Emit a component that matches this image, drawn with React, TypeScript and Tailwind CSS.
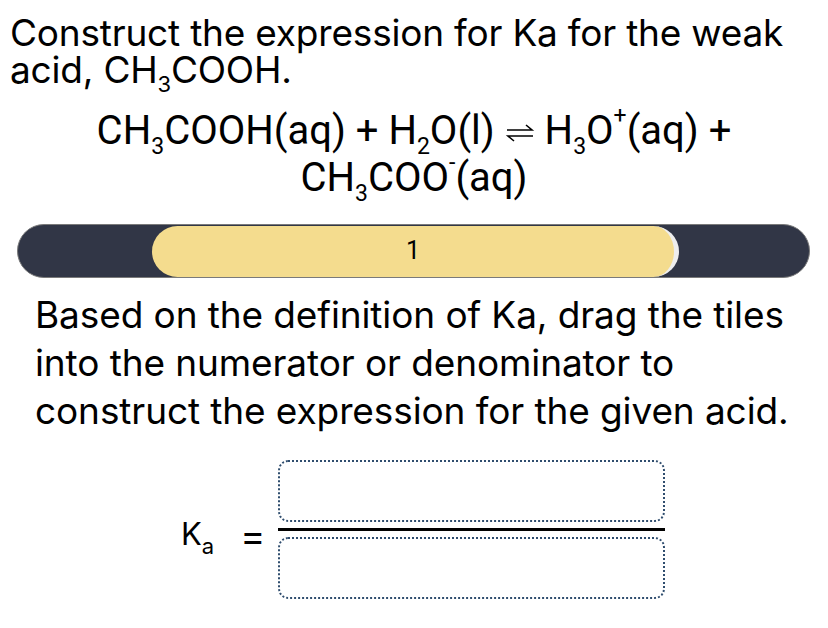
import React from "react";

const sans = { fontFamily: "Inter, 'Noto Sans', sans-serif" };
const narrow = { fontFamily: "'Liberation Sans Narrow', 'Roboto', sans-serif" };

function Sub({ children }: { children: React.ReactNode }) {
  return <sub className="text-[23px] leading-none align-[-4px]">{children}</sub>;
}
function Sup({ children }: { children: React.ReactNode }) {
  return <sup className="text-[23px] leading-none align-[10px]">{children}</sup>;
}

export default function App() {
  return (
    <div className="w-[828px] h-[628px] bg-white text-black overflow-hidden" style={sans}>
      <div className="pl-[10px] pt-[14px] text-[37px] leading-[37px] tracking-[-0.2px]">
        Construct the expression for Ka for the weak
        <br />
        acid, CH<sub className="text-[22px] leading-none align-[-3px]">3</sub>COOH.
      </div>

      <div className="mt-[18px] flex flex-col items-center text-[40px] leading-[47px]" style={narrow}>
        <div>
          CH<Sub>3</Sub>COOH(aq) + H<Sub>2</Sub>O(l){" "}
          <span className="inline-block align-middle">
            <svg width="30" height="20" viewBox="0 0 30 20" fill="none" stroke="black" strokeWidth="1.6">
              <path d="M2 7 H27 L21 2" />
              <path d="M28 13 H3 L9 18" />
            </svg>
          </span>{" "}
          H<Sub>3</Sub>O<Sup>+</Sup>(aq) +
        </div>
        <div>
          CH<Sub>3</Sub>COO<Sup>-</Sup>(aq)
        </div>
      </div>

      <div className="mt-[23px] ml-[17px] w-[793px] h-[54px] rounded-full bg-[#313646] border-[1.5px] border-[#7a7a7a] flex items-center">
        <div className="ml-[134px] w-[527px] h-[51px] rounded-full bg-[#f4dc8e] border-r-[5px] border-[#eeeeee] flex items-center justify-center text-[25px] text-black" style={narrow}>
          1
        </div>
      </div>

      <div className="pl-[35px] pt-[13px] text-[37px] leading-[48px] tracking-[-0.1px]">
        Based on the definition of Ka, drag the tiles
        <br />
        into the numerator or denominator to
        <br />
        construct the expression for the given acid.
      </div>

      <div className="mt-[25px] flex items-center">
        <div className="ml-[181px] w-[97px] pt-[10px] flex items-center text-[31px]">
          <span>K<sub className="text-[22px] leading-none align-[-3px]">a</sub></span>
          <span className="ml-[26px] text-[38px] leading-none">=</span>
        </div>
        <div className="flex flex-col w-[387px]">
          <div className="h-[62px] rounded-[10px] border-2 border-dotted border-[#2f4d6e]" />
          <div className="my-[6px] h-[3px] bg-black" />
          <div className="h-[62px] rounded-[10px] border-2 border-dotted border-[#2f4d6e]" />
        </div>
      </div>
    </div>
  );
}
